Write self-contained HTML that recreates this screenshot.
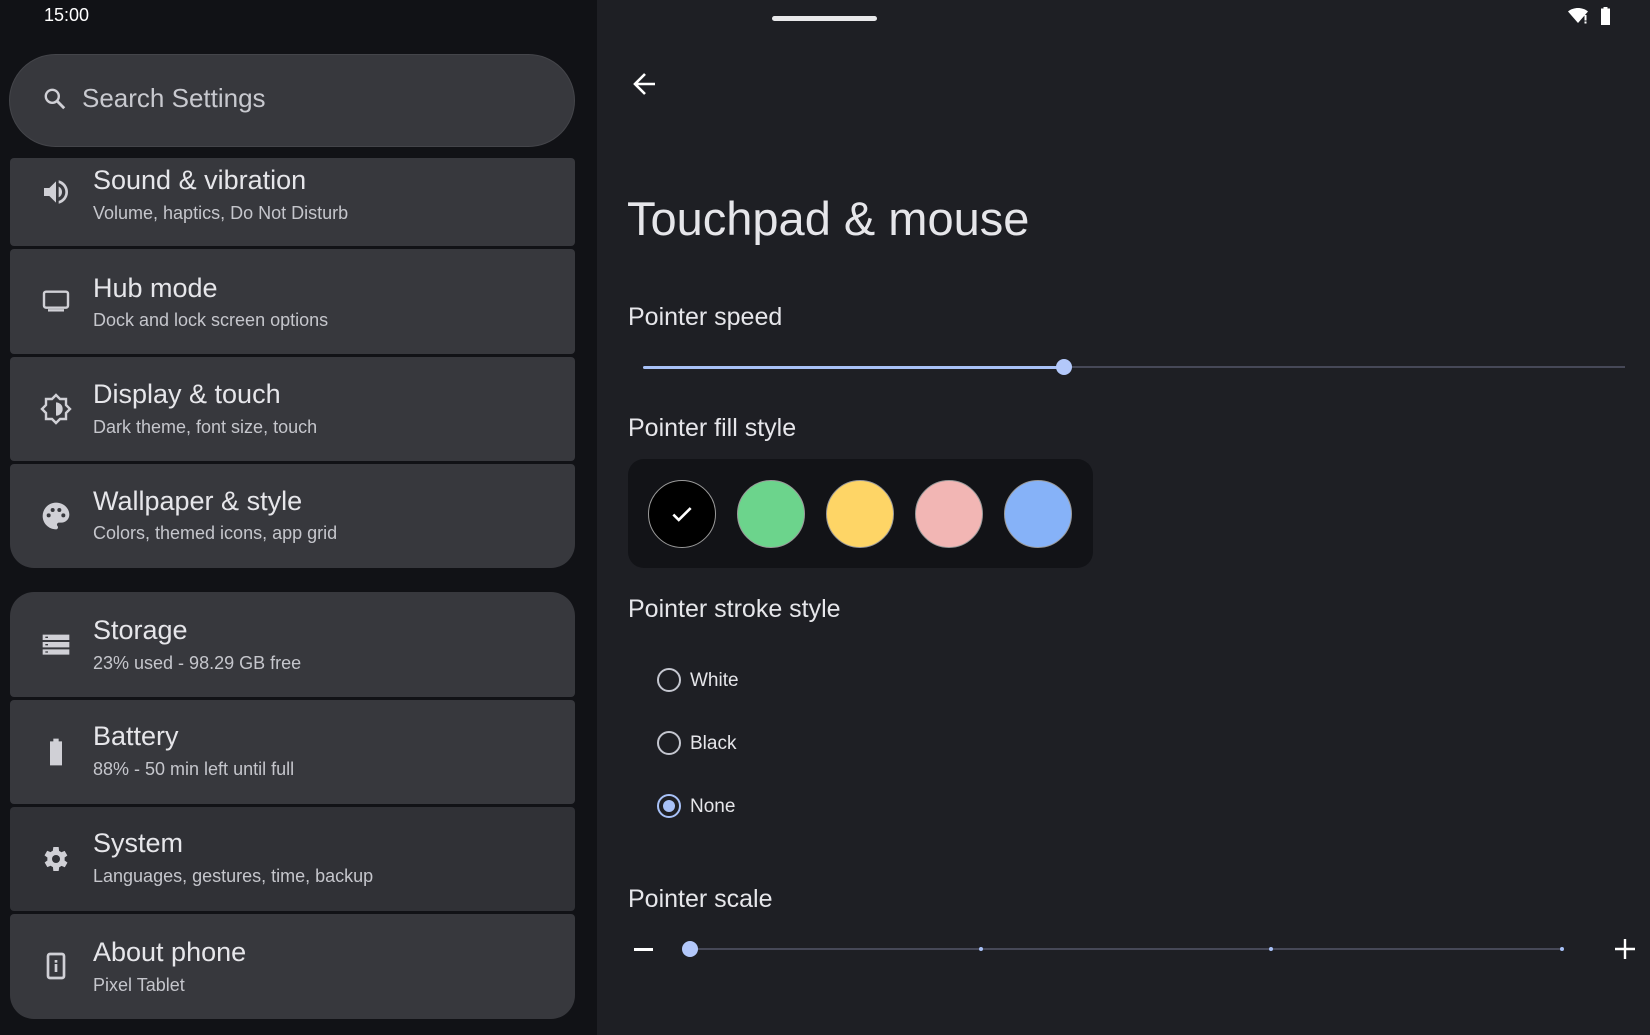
<!DOCTYPE html>
<html><head><meta charset="utf-8"><style>
*{margin:0;padding:0;box-sizing:border-box}
body{width:1650px;height:1035px;overflow:hidden;background:#1e1f24;font-family:"Liberation Sans",sans-serif;color:#e3e3e8;position:relative}
.a{position:absolute;line-height:1;white-space:nowrap}
#left{position:absolute;left:0;top:0;width:597px;height:1035px;background:#111216}
.card{position:absolute;left:10px;width:565px;background:#37383d;border-radius:4px}
.t{position:absolute;left:83px;font-size:27px;color:#e6e6ea;line-height:1}
.s{position:absolute;left:83px;font-size:18px;color:#c5c6cc;line-height:1}
.ic{position:absolute;left:30px;width:32px;height:32px}
.circ{position:absolute;width:68px;height:68px;border-radius:50%;top:480px;border:1.5px solid #9a9a9a}
.radio{position:absolute;left:657px;width:24px;height:24px;border-radius:50%;border:2.5px solid #c4c6cf}
.lbl{position:absolute;left:690px;font-size:19px;color:#e6e6ea;line-height:1}
.dot{position:absolute;width:4px;height:4px;border-radius:50%;background:#a8c1f7;top:947px}
</style></head><body>
<div id="left">
  <div class="a" style="left:44px;top:6px;font-size:18px;color:#fff">15:00</div>
  <div style="position:absolute;left:9px;top:54px;width:566px;height:93px;border-radius:47px;background:#37383d;border:1px solid #44454a"></div>
  <svg style="position:absolute;left:42px;top:86px" width="26" height="26" viewBox="0 0 24 24"><circle cx="9.5" cy="9.5" r="6" fill="none" stroke="#d0d0d6" stroke-width="2.2"/><path d="M14 14l6.5 6.5" stroke="#d0d0d6" stroke-width="2.6"/></svg>
  <div class="a" style="left:82px;top:85px;font-size:26px;color:#c8c9cf">Search Settings</div>

  <div class="card" style="top:158px;height:88px"><svg class="ic" style="top:18px" viewBox="0 0 24 24"><path d="M3 9v6h4l5 5V4L7 9H3z" fill="#d0d0d6"/><path d="M16.5 12c0-1.8-1-3.3-2.5-4v8c1.5-.7 2.5-2.2 2.5-4z" fill="#d0d0d6"/><path d="M14 3.2v2.1c2.9.9 5 3.6 5 6.7s-2.1 5.8-5 6.7v2.1c4-.9 7-4.5 7-8.8S18 4.1 14 3.2z" fill="#d0d0d6"/></svg>
    <div class="t" style="top:9px">Sound &amp; vibration</div><div class="s" style="top:46px">Volume, haptics, Do Not Disturb</div></div>
  <div class="card" style="top:249px;height:105px"><svg class="ic" style="top:36px" viewBox="0 0 24 24"><rect x="3" y="5" width="18" height="12" rx="1.5" fill="none" stroke="#d0d0d6" stroke-width="1.8"/><path d="M6 19h12" stroke="#d0d0d6" stroke-width="1.8"/></svg>
    <div class="t" style="top:26px">Hub mode</div><div class="s" style="top:62px">Dock and lock screen options</div></div>
  <div class="card" style="top:357px;height:104px"><svg class="ic" style="top:36px" viewBox="0 0 24 24"><path d="M12 2.5l3 3h4.5v4.5l3 3-3 3v4.5H15l-3 3-3-3H4.5V16l-3-3 3-3V5.5H9z" fill="none" stroke="#d0d0d6" stroke-width="1.8" transform="translate(0,-1)"/><path d="M12 7a5 5 0 010 10z" fill="#d0d0d6"/></svg>
    <div class="t" style="top:24px">Display &amp; touch</div><div class="s" style="top:61px">Dark theme, font size, touch</div></div>
  <div class="card" style="top:464px;height:104px;border-radius:4px 4px 24px 24px"><svg class="ic" style="top:36px" viewBox="0 0 24 24"><path d="M12 2C6.5 2 2 6.5 2 12s4.5 10 10 10c.9 0 1.5-.7 1.5-1.5 0-.4-.1-.7-.4-1-.2-.3-.4-.6-.4-1 0-.8.7-1.5 1.5-1.5H16c3.3 0 6-2.7 6-6 0-4.9-4.5-9-10-9z" fill="#d0d0d6"/><circle cx="6.5" cy="11.5" r="1.5" fill="#37383d"/><circle cx="9.5" cy="7.5" r="1.5" fill="#37383d"/><circle cx="14.5" cy="7.5" r="1.5" fill="#37383d"/><circle cx="17.5" cy="11.5" r="1.5" fill="#37383d"/></svg>
    <div class="t" style="top:24px">Wallpaper &amp; style</div><div class="s" style="top:60px">Colors, themed icons, app grid</div></div>

  <div class="card" style="top:592px;height:105px;border-radius:24px 24px 4px 4px"><svg class="ic" style="top:36px" viewBox="0 0 24 24"><path d="M2 5h20v4H2zM2 10.5h20v4H2zM2 16h20v4H2z" fill="#d0d0d6"/><path d="M4 6.5h2v1H4zM4 12h2v1H4zM4 17.5h2v1H4z" fill="#37383d"/></svg>
    <div class="t" style="top:25px">Storage</div><div class="s" style="top:62px">23% used - 98.29 GB free</div></div>
  <div class="card" style="top:700px;height:104px"><svg class="ic" style="top:36px" viewBox="0 0 24 24"><path d="M10 2h4v2h2.5v18h-9V4H10z" fill="#d0d0d6"/></svg>
    <div class="t" style="top:23px">Battery</div><div class="s" style="top:60px">88% - 50 min left until full</div></div>
  <div class="card" style="top:807px;height:104px;background:#303136"><svg class="ic" style="top:36px" viewBox="0 0 24 24"><path d="M19.4 13c.1-.3.1-.7.1-1s0-.7-.1-1l2.1-1.6-2-3.5-2.5 1c-.5-.4-1.1-.7-1.7-1L15 3h-4l-.4 2.8c-.6.3-1.2.6-1.7 1l-2.5-1-2 3.5L6.6 11c0 .3-.1.7-.1 1s0 .7.1 1l-2.1 1.6 2 3.5 2.5-1c.5.4 1.1.7 1.7 1L11 21h4l.4-2.8c.6-.3 1.2-.6 1.7-1l2.5 1 2-3.5z" fill="#d0d0d6" transform="translate(-1,0)"/><circle cx="12" cy="12" r="3" fill="#303136"/></svg>
    <div class="t" style="top:23px">System</div><div class="s" style="top:60px">Languages, gestures, time, backup</div></div>
  <div class="card" style="top:914px;height:105px;border-radius:4px 4px 24px 24px"><svg class="ic" style="top:36px" viewBox="0 0 24 24"><rect x="6" y="3" width="12" height="18" rx="1.5" fill="none" stroke="#d0d0d6" stroke-width="2"/><rect x="11" y="10.5" width="2" height="6" fill="#d0d0d6"/><rect x="11" y="7.5" width="2" height="2" fill="#d0d0d6"/></svg>
    <div class="t" style="top:25px">About phone</div><div class="s" style="top:62px">Pixel Tablet</div></div>
</div>

<div style="position:absolute;left:772px;top:16px;width:105px;height:5px;border-radius:3px;background:#e8e8ea"></div>
<svg style="position:absolute;left:1567px;top:7px" width="24" height="18" viewBox="0 0 24 18"><path d="M1 4.5C4 2 7.5 1 11 1s7 1 10 3.5L11 16z" fill="#fff"/><rect x="17.5" y="8" width="2" height="5.5" fill="#fff"/><rect x="17.5" y="14.5" width="2" height="2" fill="#fff"/></svg>
<svg style="position:absolute;left:1600px;top:7px" width="12" height="18" viewBox="0 0 12 18"><path d="M3.5 0h4v1.5H10V18H1V1.5h2.5z" fill="#fff"/></svg>

<svg style="position:absolute;left:629px;top:70px" width="30" height="28" viewBox="0 0 30 28"><path d="M26 14H7M16 4L6 14l10 10" fill="none" stroke="#fff" stroke-width="2.6"/></svg>

<div class="a" style="left:627px;top:195px;font-size:47px;color:#e6e6ea">Touchpad &amp; mouse</div>
<div class="a" style="left:628px;top:305px;font-size:25px;color:#e6e6ea">Pointer speed</div>
<div style="position:absolute;left:643px;top:366px;width:421px;height:3px;background:#a8c1f7;border-radius:2px"></div>
<div style="position:absolute;left:1064px;top:366px;width:561px;height:2px;background:#464857"></div>
<div style="position:absolute;left:1056px;top:359px;width:16px;height:16px;border-radius:50%;background:#b3c8fa"></div>

<div class="a" style="left:628px;top:416px;font-size:25px;color:#e6e6ea">Pointer fill style</div>
<div style="position:absolute;left:628px;top:459px;width:465px;height:109px;border-radius:16px;background:#121317"></div>
<div class="circ" style="left:648px;background:#000"><svg style="position:absolute;left:20px;top:20px" width="26" height="26" viewBox="0 0 24 24"><path d="M4 12.5l5 5L20 6.5" fill="none" stroke="#fff" stroke-width="2.4"/></svg></div>
<div class="circ" style="left:737px;background:#6cd48c"></div>
<div class="circ" style="left:826px;background:#fed566"></div>
<div class="circ" style="left:915px;background:#f2b6b4"></div>
<div class="circ" style="left:1004px;background:#86b2f8"></div>

<div class="a" style="left:628px;top:597px;font-size:25px;color:#e6e6ea">Pointer stroke style</div>
<div class="radio" style="top:668px"></div><div class="lbl" style="top:671px">White</div>
<div class="radio" style="top:731px"></div><div class="lbl" style="top:734px">Black</div>
<div class="radio" style="top:794px;border-color:#a8c1f7"><div style="position:absolute;left:3.5px;top:3.5px;width:12px;height:12px;border-radius:50%;background:#a8c1f7"></div></div><div class="lbl" style="top:797px">None</div>

<div class="a" style="left:628px;top:887px;font-size:25px;color:#e6e6ea">Pointer scale</div>
<div style="position:absolute;left:634px;top:948px;width:19px;height:3px;background:#fff"></div>
<div style="position:absolute;left:690px;top:948px;width:872px;height:2px;background:#464857"></div>
<div class="dot" style="left:979px"></div><div class="dot" style="left:1269px"></div><div class="dot" style="left:1560px"></div>
<div style="position:absolute;left:682px;top:941px;width:16px;height:16px;border-radius:50%;background:#b3c8fa"></div>
<svg style="position:absolute;left:1614px;top:938px" width="22" height="22" viewBox="0 0 22 22"><path d="M11 1v20M1 11h20" stroke="#fff" stroke-width="2.4"/></svg>
</body></html>
